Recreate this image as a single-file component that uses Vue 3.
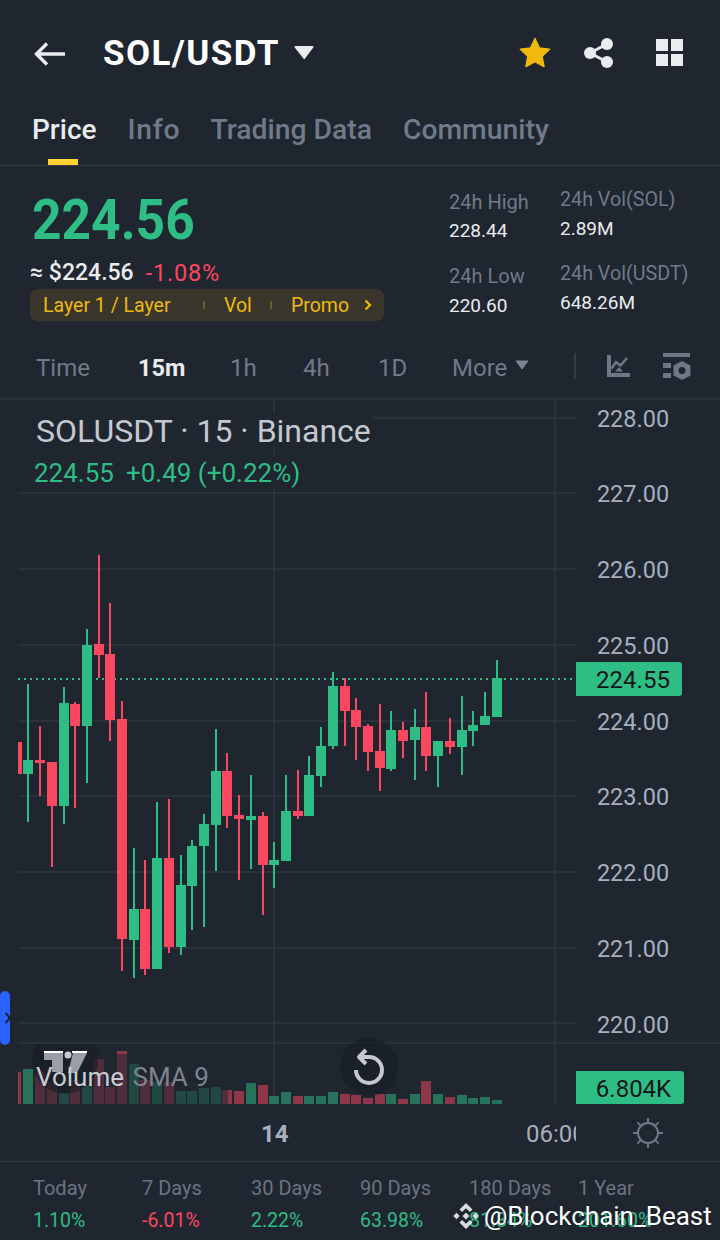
<script setup>
// [color, center x, wick top, wick bottom, body top, body bottom, volume top]
const candles = [
  ['r', 28, 742, 774, 742, 774, 1072],
  ['g', 28, 684, 822, 760, 774, 1069],
  ['r', 40, 726, 796, 760, 763, 1072],
  ['r', 52, 762, 867, 762, 806, 1082],
  ['g', 64, 687, 824, 703, 806, 1093],
  ['r', 75, 702, 808, 704, 726, 1080],
  ['g', 87, 629, 783, 645, 726, 1085],
  ['r', 99, 555, 678, 644, 655, 1059],
  ['r', 110, 603, 741, 654, 720, 1087],
  ['r', 122, 701, 971, 719, 939, 1051],
  ['g', 134, 848, 978, 909, 940, 1064],
  ['r', 145, 860, 975, 909, 969, 1080],
  ['g', 157, 802, 969, 858, 969, 1082],
  ['r', 169, 799, 953, 858, 947, 1082],
  ['g', 181, 855, 955, 885, 947, 1091],
  ['g', 192, 840, 930, 846, 886, 1091],
  ['g', 204, 814, 927, 824, 846, 1088],
  ['g', 216, 729, 871, 771, 825, 1087],
  ['r', 227, 753, 828, 771, 816, 1090],
  ['r', 239, 795, 880, 815, 819, 1091],
  ['g', 251, 775, 869, 816, 820, 1083],
  ['r', 263, 812, 915, 816, 865, 1085],
  ['g', 274, 842, 888, 860, 865, 1096],
  ['g', 286, 775, 861, 811, 861, 1092],
  ['r', 298, 770, 819, 811, 816, 1096],
  ['g', 309, 756, 816, 775, 816, 1096],
  ['g', 321, 727, 787, 746, 776, 1096],
  ['g', 333, 672, 749, 686, 746, 1092],
  ['r', 345, 678, 746, 686, 711, 1094],
  ['r', 356, 698, 760, 710, 727, 1095],
  ['r', 368, 724, 771, 726, 752, 1098],
  ['r', 380, 704, 791, 751, 768, 1094],
  ['g', 391, 711, 771, 730, 769, 1094],
  ['r', 403, 722, 758, 730, 741, 1099],
  ['g', 415, 709, 780, 727, 740, 1094],
  ['r', 426, 692, 771, 727, 756, 1081],
  ['g', 438, 741, 787, 741, 756, 1094],
  ['r', 450, 718, 754, 741, 747, 1097],
  ['g', 462, 696, 775, 730, 747, 1095],
  ['g', 473, 711, 746, 725, 731, 1098],
  ['g', 485, 692, 725, 716, 725, 1097],
  ['g', 497, 660, 717, 678, 717, 1100],
].map(([c, x, wt, wb, bt, bb, vt]) => ({ c, x, wt, wb, bt, bb, vt }))

const colors = { g: '#2ebd85', r: '#fb4760' }

const gridY = [418, 493, 569, 645, 721, 796, 872, 948, 1023]
const axis = [
  ['228.00', 418], ['227.00', 493], ['226.00', 569], ['225.00', 645], ['224.00', 721],
  ['223.00', 796], ['222.00', 872], ['221.00', 948], ['220.00', 1024],
]

const dots = []
for (let x = 18; x < 574; x += 6) dots.push(x)

const tabs = ['Price', 'Info', 'Trading Data', 'Community']
const intervals = [
  { t: 'Time', w: 102 }, { t: '15m', w: 92, on: true }, { t: '1h', w: 73 },
  { t: '4h', w: 75 }, { t: '1D', w: 74 },
]
const perf = [
  ['Today', '1.10%', 'up'], ['7 Days', '-6.01%', 'down'], ['30 Days', '2.22%', 'up'],
  ['90 Days', '63.98%', 'up'], ['180 Days', '81.84%', 'up'], ['1 Year', '201.60%', 'up'],
]
</script>

<template>
  <div class="page">
    <header class="head">
      <svg class="back" width="32" height="26" viewBox="0 0 32 26">
        <path d="M31 13H3M13 2.5 2.5 13 13 23.5" fill="none" stroke="#eaecef" stroke-width="3.4" />
      </svg>
      <span class="pair">SOL/USDT</span>
      <svg class="caret" width="20" height="15" viewBox="0 0 20 15">
        <path d="M1.5 1h17a1 1 0 0 1 .8 1.6l-8.300 11a1 1 0 0 1-1.600 0L.7 2.600A1 1 0 0 1 1.500 1z" fill="#eaecef" />
      </svg>
      <svg class="star" width="32" height="32" viewBox="0 0 32 32">
        <path d="M16 1.500 20.400 11l10.200 1.300-7.500 7 1.900 10.200L16 24.500l-9 5 1.900-10.200-7.500-7L11.600 11z" fill="#f0b90b" stroke="#f0b90b" stroke-width="1.500" stroke-linejoin="round" />
      </svg>
      <svg class="share" width="32" height="32" viewBox="0 0 32 32">
        <path d="M24 7 7 16l17 9" fill="none" stroke="#eaecef" stroke-width="3" />
        <circle cx="24" cy="7" r="6" fill="#eaecef" />
        <circle cx="7" cy="16" r="6" fill="#eaecef" />
        <circle cx="24" cy="25" r="6" fill="#eaecef" />
      </svg>
      <div class="apps"><i></i><i></i><i></i><i></i></div>
    </header>

    <nav class="tabs">
      <span v-for="(t, i) in tabs" :key="t" class="tab" :class="{ on: i === 0 }">{{ t }}</span>
    </nav>

    <section class="stats">
      <div class="left">
        <div class="last">224.56</div>
        <div class="fiat"><b>≈ $224.56</b><span>-1.08%</span></div>
        <div class="tags">
          <span class="t1">Layer 1 / Layer</span>
          <i></i>
          <span>Vol</span>
          <i></i>
          <span>Promo</span>
          <svg width="10" height="12" viewBox="0 0 10 12"><path d="M2.500 1.500 7 6l-4.500 4.500" fill="none" stroke="#f0b90b" stroke-width="2.200" /></svg>
        </div>
      </div>
      <div class="cols">
        <div class="col">
          <div class="k">24h High</div>
          <div class="v">228.44</div>
          <div class="k second">24h Low</div>
          <div class="v">220.60</div>
        </div>
        <div class="col alt">
          <div class="k">24h Vol(SOL)</div>
          <div class="v">2.89M</div>
          <div class="k second">24h Vol(USDT)</div>
          <div class="v">648.26M</div>
        </div>
      </div>
    </section>

    <div class="intervals">
      <span v-for="it in intervals" :key="it.t" class="iv" :class="{ on: it.on }" :style="{ width: it.w + 'px' }">{{ it.t }}</span>
      <span class="iv more">More</span>
      <svg class="more-caret" width="14" height="10" viewBox="0 0 14 10"><path d="M1 1h12L7 9z" fill="#7c8494" stroke="#7c8494" stroke-linejoin="round" /></svg>
      <i class="sep"></i>
      <svg class="ic1" width="24" height="24" viewBox="0 0 24 24" fill="#6f7686">
        <path d="M1 1h4v18h19v4H1z" />
        <path d="M5.500 14.500 10 8l4.500 3.500L21 4" fill="none" stroke="#6f7686" stroke-width="2.600" />
        <path d="M9 17.500l4-4.500 4 4.500z" />
      </svg>
      <svg class="ic2" width="30" height="30" viewBox="0 0 30 30" fill="#6f7686">
        <path d="M1 1h27v4H1zM1 11h8v5H1zM1 21h8v5H1z" />
        <path fill-rule="evenodd" d="M20 9l8.500 4.500v10L20 28l-8.500-4.500v-10zM20 15a3.500 3.500 0 1 0 0 7 3.500 3.500 0 0 0 0-7z" />
      </svg>
    </div>

    <div class="chart">
      <svg class="plot" width="720" height="707" viewBox="0 397 720 707">
        <rect x="0" y="397" width="720" height="3" fill="#272e38" />
        <rect v-for="y in gridY" :key="y" x="18" :y="y - 1" width="558" height="2" fill="#2a313b" />
        <rect x="18" y="1042" width="702" height="2" fill="#2a313b" />
        <rect x="273" y="397" width="2" height="707" fill="#2a313b" />
        <rect x="554" y="397" width="2" height="707" fill="#2a313b" />
        <rect v-for="x in dots" :key="x" :x="x" y="678" width="2" height="2" fill="#2ebd85" />

        <!-- volume -->
        <rect v-for="(k, i) in candles" :key="'v' + i" :x="i === 0 ? 18 : k.x - 5" :y="k.vt" :width="i === 0 ? 3 : 10" :height="1104 - k.vt" :fill="colors[k.c]" fill-opacity="0.5" />
        <rect x="35" y="1054" width="193" height="50" fill="#1f2630" fill-opacity="0.55" />

        <!-- tradingview badge -->
        <g class="tv">
          <path d="M36.500 1044a33 33 0 1 0 57 0z" fill="#171c24" fill-opacity="0.6" />
          <path d="M44 1053h19v19H52v-12h-8z" fill="#9b9ea6" />
          <rect x="44" y="1051" width="19" height="2" fill="#fff" />
          <circle cx="68" cy="1055" r="3.500" fill="#c8cad0" />
          <path d="M73 1053h14l-10 20h-9z" fill="#9b9ea6" />
          <rect x="72" y="1051" width="15" height="2" fill="#fff" />
        </g>

        <!-- candles -->
        <g v-for="(k, i) in candles" :key="'c' + i" :fill="colors[k.c]">
          <template v-if="i === 0">
            <rect x="18" :y="k.bt" width="4" :height="k.bb - k.bt" />
          </template>
          <template v-else>
            <rect :x="k.x - 1" :y="k.wt" width="2" :height="k.wb - k.wt" />
            <rect :x="k.x - 5" :y="k.bt" width="10" :height="k.bb - k.bt" />
          </template>
        </g>

        <!-- reset -->
        <circle cx="369" cy="1067" r="29" fill="#171c24" fill-opacity="0.6" />
        <path d="M359 1057h10a13 13 0 1 1-13 13M366 1050l-7 7 7 7" fill="none" stroke="#c4c8d0" stroke-width="4" stroke-linejoin="round" />

        <text v-for="a in axis" :key="a[0]" class="ax" x="633" :y="a[1] + 8.500" text-anchor="middle">{{ a[0] }}</text>

        <path d="M576 662h103a3 3 0 0 1 3 3v28a3 3 0 0 1-3 3h-103z" fill="#2ebd85" />
        <text class="ax tag" x="633" y="688" text-anchor="middle">224.55</text>
        <path d="M576 1071h105a3 3 0 0 1 3 3v27a3 3 0 0 1-3 3h-105z" fill="#2ebd85" />
        <text class="ax tag" x="633.500" y="1097" text-anchor="middle">6.804K</text>
      </svg>

      <div class="legend">
        <div class="l1">SOLUSDT · 15 · Binance</div>
        <div class="l2"><span>224.55</span><span>+0.49 (+0.22%)</span></div>
      </div>
      <div class="vol-legend"><span>Volume</span> <em>SMA 9</em></div>
      <div class="blue-tab">
        <svg width="10" height="14" viewBox="0 0 10 14"><path d="M5.500 2 10 7l-4.500 5" fill="none" stroke="#1b2430" stroke-width="2" /></svg>
      </div>
    </div>

    <div class="timeaxis">
      <div class="times">
        <span class="day">14</span>
        <span class="hour">06:00</span>
      </div>
      <svg class="sun" width="32" height="32" viewBox="0 0 32 32" fill="none" stroke="#6f7686" stroke-width="2">
        <circle cx="16" cy="16" r="10" />
        <path d="M16 1v5M16 26v5M1 16h5M26 16h5M5.400 5.400l3.500 3.500M23.100 23.100l3.500 3.500M5.400 26.600l3.500-3.500M23.100 8.900l3.500-3.500" />
      </svg>
    </div>

    <div class="perf">
      <div v-for="p in perf" :key="p[0]" class="cell">
        <div class="pk">{{ p[0] }}</div>
        <div class="pv" :class="p[2]">{{ p[1] }}</div>
      </div>
    </div>

    <div class="mark">
      <svg width="28" height="28" viewBox="0 0 28 28" fill="#d9dbdf">
        <path d="M14 1l6.500 6.500-2.600 2.600L14 6.200l-3.900 3.900-2.600-2.600zM14 27l-6.500-6.500 2.600-2.600 3.900 3.900 3.900-3.900 2.600 2.600zM4.500 10.800 7.700 14l-3.200 3.200L1.300 14zM23.500 10.800l3.200 3.200-3.200 3.200-3.200-3.200zM14 10.500l3.500 3.500-3.500 3.500-3.500-3.500z" />
      </svg>
      <span>@Blockchain_Beast</span>
    </div>
  </div>
</template>

<style>
html, body { margin: 0; background: #1f2630; }
</style>

<style scoped>
.page {
  width: 720px;
  height: 1240px;
  position: relative;
  overflow: hidden;
  background: #1f2630;
  color: #eaecef;
  font-family: Roboto, "Liberation Sans", sans-serif;
}
.head {
  height: 108px;
  box-sizing: border-box;
  padding: 38px 0 0 34px;
  display: flex;
  align-items: flex-start;
}
.back { margin-top: 3px; }
.pair {
  margin-left: 37px;
  font-size: 35px;
  line-height: 34px;
  margin-top: -1px;
  font-weight: 700;
  color: #fff;
  letter-spacing: 1.4px;
}
.caret { margin: 7px 0 0 14px; }
.star { margin: -1px 0 0 205px; }
.share { margin: -1px 0 0 32px; }
.apps {
  margin: 1px 0 0 41px;
  display: grid;
  grid-template-columns: 12px 12px;
  grid-auto-rows: 12px;
  gap: 3px;
}
.apps i { background: #eaecef; }

.tabs {
  height: 58px;
  box-sizing: border-box;
  border-bottom: 1px solid #333a45;
  padding: 1px 0 0 32px;
  display: flex;
  gap: 31px;
}
.tab {
  font-size: 28.300px;
  line-height: 42px;
  color: #707a8a;
  font-weight: 500;
  position: relative;
}
.tab:nth-child(2) { width: 52px; letter-spacing: 0.7px; }
.tab.on { color: #eaecef; font-size: 28px; }
.tab.on::after {
  content: "";
  position: absolute;
  left: 16px;
  width: 30px;
  height: 6px;
  top: 50px;
  background: #fcd535;
}

.stats {
  height: 174px;
  box-sizing: border-box;
  padding: 0 0 0 30px;
  display: flex;
}
.left { width: 419px; }
.last {
  margin: 22px 0 0 2px;
  font-size: 56px;
  line-height: 64px;
  font-weight: 700;
  color: #2ebd85;
  transform: scaleX(0.92);
  transform-origin: left center;
}
.fiat {
  margin-top: 7px;
  display: flex;
  gap: 12px;
  font-size: 23px;
  line-height: 28px;
}
.fiat b { font-weight: 500; color: #eaecef; }
.fiat span { color: #fb4760; font-size: 23.500px; letter-spacing: 0.8px; }
.tags {
  margin-top: 2px;
  width: 354px;
  height: 32px;
  box-sizing: border-box;
  border-radius: 8px;
  background: #3a362c;
  padding-left: 13px;
  display: flex;
  align-items: center;
  color: #f0b90b;
  font-size: 19.500px;
}
.tags span { white-space: nowrap; }
.tags .t1 { width: 160px; }
.tags i {
  width: 2px;
  height: 8px;
  background: #6b5f27;
  margin-right: 19px;
}
.tags span:nth-of-type(2) { width: 46px; }
.tags span:nth-of-type(3) { width: 72px; }
.cols { display: flex; }
.col { width: 111px; padding-top: 24px; }
.col.alt { padding-top: 22px; }
.k {
  font-size: 20px;
  line-height: 24px;
  color: #707a8a;
  white-space: nowrap;
}
.alt .k { font-size: 19.700px; }
.v {
  margin-top: 5px;
  font-size: 19px;
  line-height: 24px;
  color: #eaecef;
}
.second { margin-top: 21px; }
.col:not(.alt) .second + .v { margin-top: 6px; }

.intervals {
  height: 64px;
  box-sizing: border-box;
  padding: 6px 0 0 36px;
  display: flex;
  align-items: center;
  margin-top: -7px;
}
.iv {
  font-size: 24px;
  color: #707a8a;
  white-space: nowrap;
  display: block;
}
.iv.on { color: #eaecef; font-weight: 700; font-size: 23.500px; }
.more-caret { margin: -6px 0 0 8px; }
.sep {
  width: 2px;
  height: 26px;
  background: #343b46;
  margin: -4px 0 0 45px;
}
.ic1 { margin: -4px 0 0 30px; }
.ic2 { margin: -2px 0 0 32px; }

.chart {
  height: 707px;
  position: relative;
}
.plot {
  position: absolute;
  left: 0;
  top: 0;
  display: block;
}
.ax {
  font-family: Roboto, sans-serif;
  font-size: 23.500px;
  fill: #a9aebd;
}
.ax.tag { fill: #11161c; font-size: 24px; }
.legend {
  position: absolute;
  left: 18px;
  top: 16px;
  font-size: 32px;
  color: #c4c8d0;
}
.l1 {
  line-height: 36px;
  background: rgba(31, 38, 48, 0.92);
  width: fit-content;
  padding: 0 2px 0 18px;
}
.l2 {
  margin-top: 8px;
  padding-left: 16px;
  display: flex;
  gap: 12px;
  font-size: 26px;
  line-height: 32px;
  color: #2ebd85;
  background: rgba(31, 38, 48, 0.92);
  width: fit-content;
}
.vol-legend {
  position: absolute;
  left: 36px;
  top: 664px;
  font-size: 26px;
  line-height: 32px;
  color: #c8ccd4;
  white-space: nowrap;
}
.vol-legend em { font-style: normal; color: #7d838f; margin-left: 2px; }
.blue-tab {
  position: absolute;
  left: 0;
  top: 594px;
  width: 10px;
  height: 54px;
  border-radius: 6px;
  overflow: hidden;
  background: #2962ff;
  display: flex;
  align-items: center;
}

.timeaxis {
  height: 57px;
  position: relative;
}
.times {
  width: 576px;
  height: 57px;
  position: relative;
  overflow: hidden;
}
.day {
  position: absolute;
  left: 261px;
  top: 15px;
  font-size: 24px;
  line-height: 30px;
  font-weight: 700;
  color: #a9aebd;
}
.hour {
  position: absolute;
  left: 526px;
  top: 15px;
  font-size: 24px;
  line-height: 30px;
  color: #a9aebd;
}
.sun {
  position: absolute;
  left: 632px;
  top: 13px;
}

.perf {
  height: 79px;
  box-sizing: border-box;
  border-top: 1px solid #333a45;
  padding: 13px 0 0 33px;
  display: grid;
  grid-template-columns: repeat(6, 109px);
  align-content: start;
}
.pk {
  font-size: 20px;
  line-height: 26px;
  color: #6b7381;
  white-space: nowrap;
}
.pv {
  margin-top: 7px;
  font-size: 19.500px;
  line-height: 26px;
}
.pv.up { color: #2ebd85; }
.pv.down { color: #fb4760; }

.mark {
  position: absolute;
  left: 452px;
  top: 1201px;
  display: flex;
  align-items: center;
  gap: 4px;
  color: #fff;
  font-size: 26px;
  line-height: 30px;
  text-shadow: 0 0 2px rgba(0, 0, 0, 0.5);
}
</style>
